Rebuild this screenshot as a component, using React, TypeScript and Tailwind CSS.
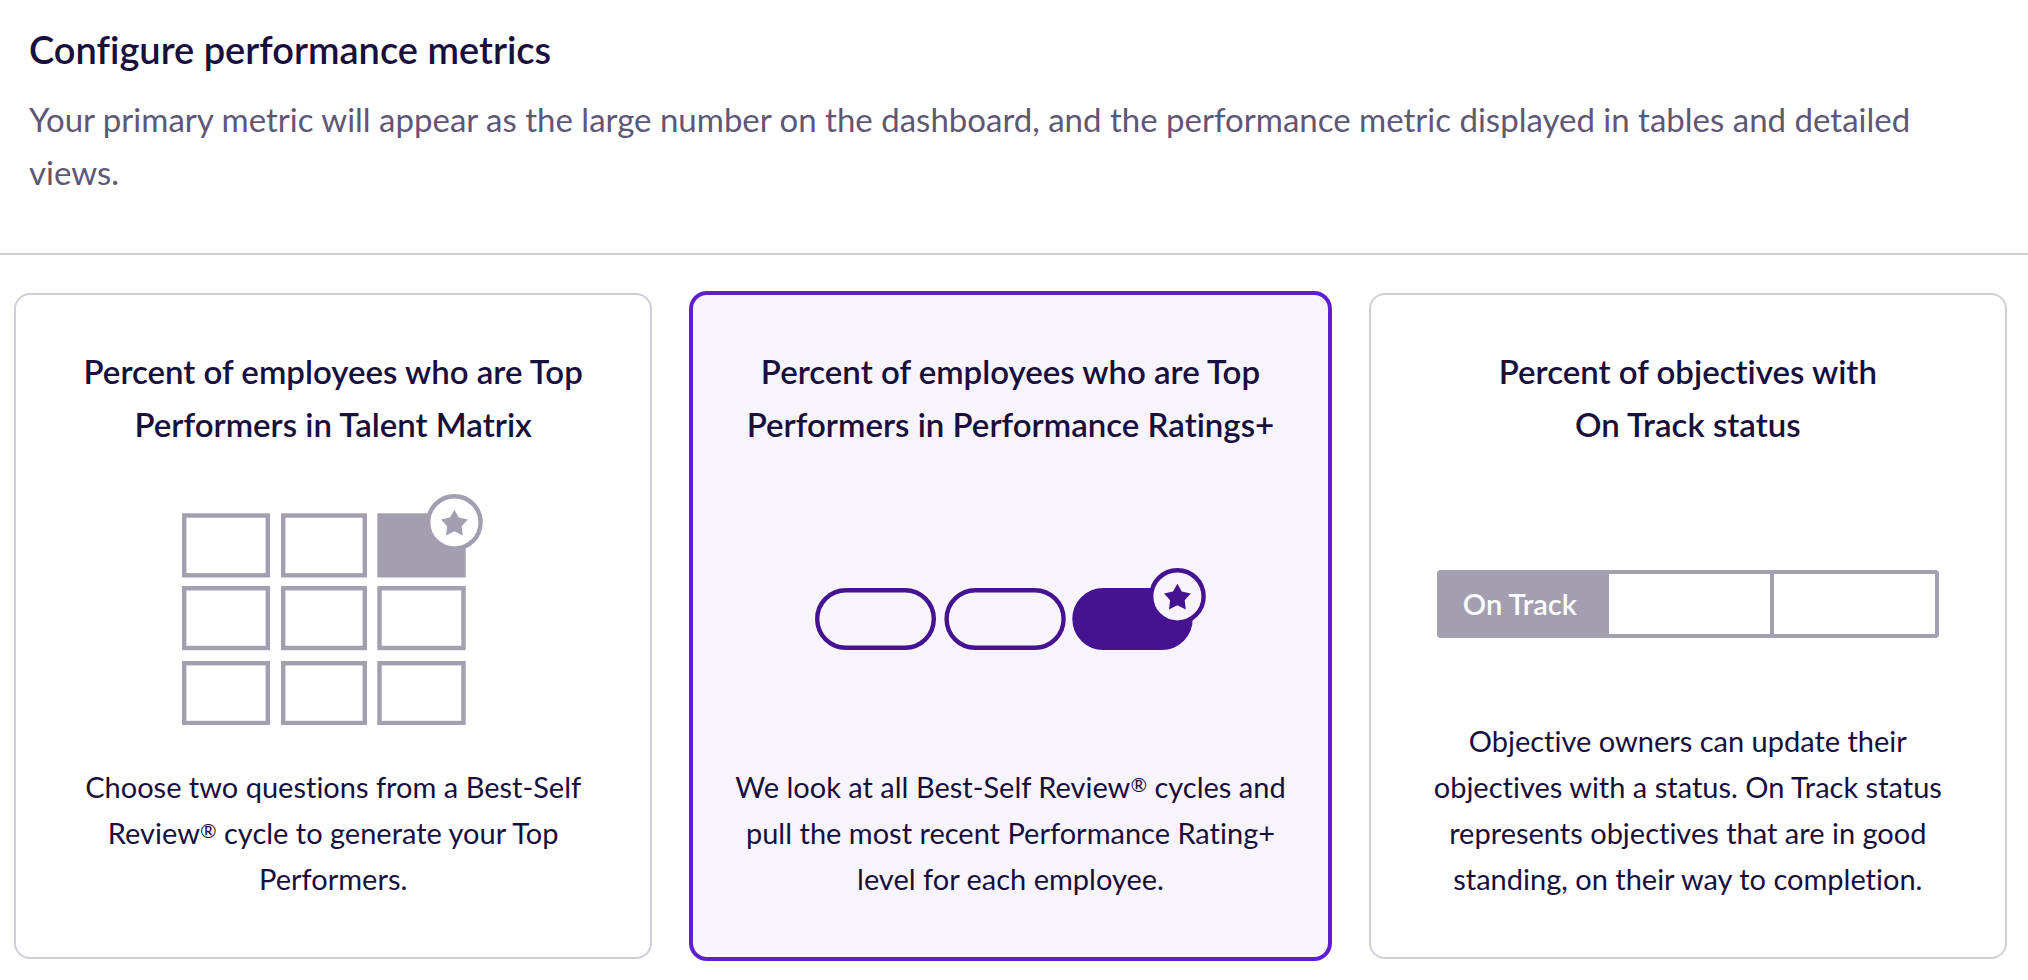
import { useState, type ReactNode } from "react";

function StarBadge({ cx, cy, fill }: { cx: number; cy: number; fill: string }) {
  return (
    <g transform={`translate(${cx} ${cy})`}>
      <circle r="26.2" fill={fill} stroke="currentColor" strokeWidth="4.4" />
      <path
        d="M0 -12.7 4.4 -4.8 13.4 -3 7.3 3.8 8.4 13 0 8.9 -8.4 13 -7.3 3.8 -13.4 -3 -4.4 -4.8Z"
        fill="currentColor"
      />
    </g>
  );
}

function MatrixGraphic({ fill }: { fill: string }) {
  const columns = [
    { x: 0, w: 88 },
    { x: 99, w: 86 },
    { x: 195.3, w: 88.4 },
  ];
  const rows = [19.3, 92, 167];
  return (
    <svg width="302" height="231" viewBox="0 0 302 231" aria-hidden="true">
      {rows.map((y, r) =>
        columns.map(({ x, w }, c) => (
          <rect
            key={`${r}-${c}`}
            x={x + 2.2}
            y={y + 2.2}
            width={w - 4.4}
            height="59.8"
            fill={r === 0 && c === 2 ? "currentColor" : "none"}
            stroke="currentColor"
            strokeWidth="4.4"
          />
        )),
      )}
      <StarBadge cx={272.4} cy={28.4} fill={fill} />
    </svg>
  );
}

function RatingsGraphic({ fill }: { fill: string }) {
  return (
    <svg width="391" height="82" viewBox="0 0 391 82" aria-hidden="true">
      <g stroke="currentColor" strokeWidth="4.4">
        <rect x="2.2" y="22.2" width="116.6" height="57.6" rx="28.8" fill="none" />
        <rect x="131.6" y="22.2" width="117" height="57.6" rx="28.8" fill="none" />
        <rect x="259.5" y="22.2" width="116" height="57.6" rx="28.8" fill="currentColor" />
      </g>
      <StarBadge cx={362.4} cy={28.4} fill={fill} />
    </svg>
  );
}

function StatusGraphic() {
  return (
    <div className="flex h-17 w-full rounded border-4 border-current bg-current">
      <div className="flex w-42 items-center pl-[22px]">
        <span className="text-[29px] leading-9 font-semibold text-white">On Track</span>
      </div>
      <div className="flex flex-1 gap-1">
        <div className="flex-1 bg-white" />
        <div className="flex-1 bg-white" />
      </div>
    </div>
  );
}

function Registered() {
  return <sup className="top-0 align-[6px] text-[20px] leading-none">®</sup>;
}

type Metric = {
  id: string;
  title: ReactNode;
  description: ReactNode;
  graphic: (fill: string) => ReactNode;
  graphicClass: string;
};

const metrics: Metric[] = [
  {
    id: "talent-matrix",
    title: (
      <>
        Percent of employees who are Top
        <br />
        Performers in Talent Matrix
      </>
    ),
    description: (
      <>
        Choose two questions from a Best-Self Review
        <Registered /> cycle to generate your Top Performers.
      </>
    ),
    graphic: (fill) => <MatrixGraphic fill={fill} />,
    graphicClass: "",
  },
  {
    id: "performance-ratings",
    title: (
      <>
        Percent of employees who are Top
        <br />
        Performers in Performance Ratings+
      </>
    ),
    description: (
      <>
        We look at all Best-Self Review
        <Registered /> cycles and pull the most recent Performance Rating+ level for each employee.
      </>
    ),
    graphic: (fill) => <RatingsGraphic fill={fill} />,
    graphicClass: "",
  },
  {
    id: "on-track",
    title: (
      <>
        Percent of objectives with
        <br />
        On Track status
      </>
    ),
    description:
      "Objective owners can update their objectives with a status. On Track status represents objectives that are in good standing, on their way to completion.",
    graphic: () => <StatusGraphic />,
    graphicClass: "pt-9",
  },
];

export default function App() {
  const [selected, setSelected] = useState("performance-ratings");

  return (
    <main className="bg-white pb-5 font-['Lato',sans-serif] text-[#180f3d] [font-variant-ligatures:none]">
      <header className="border-b-2 border-[#d0ced8] px-[29px] pt-[23px] pb-[54px]">
        <h1 className="text-[38px] leading-[52px] font-semibold">Configure performance metrics</h1>
        <p className="mt-[18px] text-[33px] leading-[53px] text-[#5e5775]">
          Your primary metric will appear as the large number on the dashboard, and the performance metric displayed
          in tables and detailed views.
        </p>
      </header>

      <div
        role="radiogroup"
        aria-label="Primary metric"
        className="mt-[38px] grid grid-cols-3 gap-[39px] pr-[21px] pl-[14px]"
      >
        {metrics.map((metric) => {
          const active = metric.id === selected;
          return (
            <label
              key={metric.id}
              className={`flex min-h-[666px] cursor-pointer flex-col items-center rounded-2xl border-2 px-[34px] pt-[50px] pb-[55px] text-center ${
                active ? "border-[#5f1ed2] bg-[#f7f4fc] ring-2 ring-[#5f1ed2]" : "border-[#d0ced8] bg-white"
              }`}
            >
              <input
                type="radio"
                name="metric"
                value={metric.id}
                checked={active}
                onChange={() => setSelected(metric.id)}
                className="sr-only"
              />
              <span className="pb-[3px] text-[33px] leading-[53px] font-semibold whitespace-nowrap">
                {metric.title}
              </span>
              <span
                className={`flex w-full max-w-[502px] flex-1 items-center justify-center ${metric.graphicClass} ${
                  active ? "text-[#451291]" : "text-[#a39fb0]"
                }`}
              >
                {metric.graphic(active ? "#f7f4fc" : "#ffffff")}
              </span>
              <span className="text-[29px] leading-[46px]">{metric.description}</span>
            </label>
          );
        })}
      </div>
    </main>
  );
}
